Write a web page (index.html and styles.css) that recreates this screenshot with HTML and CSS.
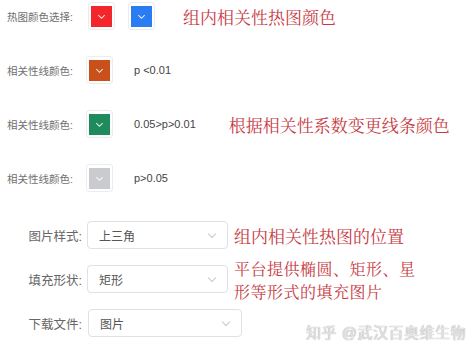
FILE: index.html
```html
<!DOCTYPE html>
<html lang="zh">
<head>
<meta charset="UTF-8">
<title>热图参数设置</title>
<link rel="stylesheet" href="styles.css">
</head>
<body>
    <div id="panel">
        <div class="color-section">
            <div class="row">
                <span class="label">热图颜色选择:</span>
                <span class="swatch first"><span class="chip red"></span></span>
                <span class="swatch second"><span class="chip blue"></span></span>
                <span class="note note-heat">组内相关性热图颜色</span>
            </div>
            <div class="row">
                <span class="label">相关性线颜色:</span>
                <span class="swatch"><span class="chip orange"></span></span>
                <span class="value">p &lt;0.01</span>
            </div>
            <div class="row">
                <span class="label">相关性线颜色:</span>
                <span class="swatch"><span class="chip green"></span></span>
                <span class="value">0.05&gt;p&gt;0.01</span>
                <span class="note note-line">根据相关性系数变更线条颜色</span>
            </div>
            <div class="row">
                <span class="label">相关性线颜色:</span>
                <span class="swatch"><span class="chip gray"></span></span>
                <span class="value">p&gt;0.05</span>
            </div>
        </div>

        <div class="select-section">
            <div class="row">
                <span class="label">图片样式:</span>
                <div class="select"><span>上三角</span><i class="arrow"></i></div>
                <span class="note">组内相关性热图的位置</span>
            </div>
            <div class="row">
                <span class="label">填充形状:</span>
                <div class="select"><span>矩形</span><i class="arrow"></i></div>
                <div class="note multi">
                    <span>平台提供椭圆、矩形、星</span>
                    <span>形等形式的填充图片</span>
                </div>
            </div>
            <div class="row">
                <span class="label">下载文件:</span>
                <div class="select wide"><span>图片</span><i class="arrow"></i></div>
            </div>
        </div>
    </div>

    <div class="watermark">知乎 @武汉百奥维生物</div>
</body>
</html>
```

FILE: styles.css
```css
body {
    font-family: "Liberation Sans", "Noto Sans CJK SC", sans-serif;
    background-color: #ffffff;
    margin: 0;
    padding: 0;
    width: 474px;
    height: 353px;
    overflow: hidden;
    position: relative;
}

#panel {
    display: flex;
    flex-direction: column;
    padding-top: 2px;
}

.color-section {
    display: flex;
    flex-direction: column;
    gap: 26px;
}

.select-section {
    display: flex;
    flex-direction: column;
    gap: 16px;
    margin-top: 29px;
}

.row {
    display: flex;
    align-items: center;
    height: 28px;
}

.color-section .label {
    width: 73px;
    margin-right: 13px;
    text-align: right;
    font-size: 10.5px;
    color: #707070;
}

.select-section .label {
    width: 82px;
    margin-right: 5px;
    text-align: right;
    font-size: 12.5px;
    color: #666;
}

.swatch {
    width: 27px;
    height: 28px;
    box-sizing: border-box;
    border: 1px solid #ececec;
    border-radius: 3px;
    display: flex;
    align-items: center;
    justify-content: center;
    background-color: #fff;
}

.swatch.first {
    margin-left: 2px;
}

.swatch.second {
    margin-left: 13px;
}

.chip {
    width: 21px;
    height: 21px;
    position: relative;
}

.chip::after {
    content: "";
    position: absolute;
    left: 8px;
    top: 7px;
    width: 4px;
    height: 4px;
    border-right: 1px solid rgba(255, 255, 255, 0.85);
    border-bottom: 1px solid rgba(255, 255, 255, 0.85);
    transform: rotate(45deg);
}

.chip.red { background-color: #f3262b; }
.chip.blue { background-color: #2a7cf2; }
.chip.orange { background-color: #c9501b; }
.chip.green { background-color: #1f8b5c; }
.chip.gray { background-color: #c9cbcf; }

.value {
    margin-left: 21px;
    font-size: 11px;
    color: #444;
}

.note {
    font-family: "Noto Serif CJK SC", "Noto Sans CJK SC", serif;
    font-size: 17px;
    line-height: 21px;
    color: #c73a44;
    margin-left: 6px;
}

.note.multi {
    display: flex;
    flex-direction: column;
    margin-top: 2px;
    font-size: 16px;
    letter-spacing: 0.5px;
}

.note.multi span {
    line-height: 23.5px;
}

.note-heat {
    margin-left: 28px;
}

.note-line {
    margin-left: 33px;
}

.select {
    width: 141px;
    height: 28px;
    box-sizing: border-box;
    border: 1px solid #dfe1e6;
    border-radius: 4px;
    display: flex;
    align-items: center;
    justify-content: space-between;
    padding: 0 12px 0 11px;
    font-size: 12px;
    color: #555;
}

.select.wide {
    width: 154px;
    margin-left: 1px;
}

.arrow {
    width: 5px;
    height: 5px;
    border-right: 1px solid #c8c8c8;
    border-bottom: 1px solid #c8c8c8;
    transform: rotate(45deg);
    margin-top: -3px;
}

.watermark {
    position: absolute;
    left: 306px;
    top: 321px;
    font-size: 15px;
    color: #e6e6e6;
    text-shadow: 0 0 1px #8a8a8a;
    letter-spacing: 0.5px;
}
```
